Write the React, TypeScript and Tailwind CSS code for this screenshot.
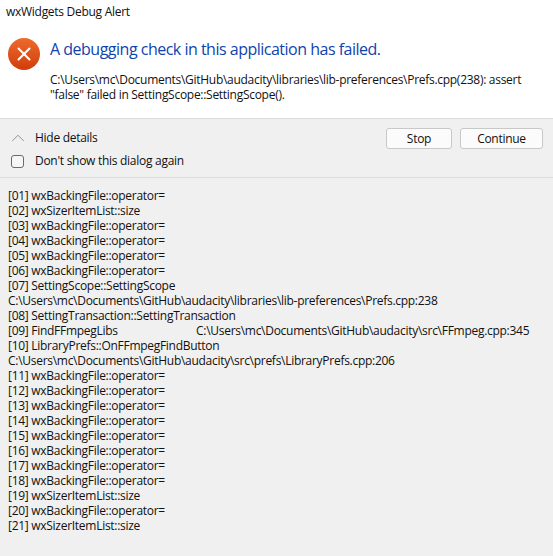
import { ChevronUp, X } from 'lucide-react';

const font = { fontFamily: '"Open Sans", "Noto Sans", sans-serif' };

const trace = [
  '[01] wxBackingFile::operator=',
  '[02] wxSizerItemList::size',
  '[03] wxBackingFile::operator=',
  '[04] wxBackingFile::operator=',
  '[05] wxBackingFile::operator=',
  '[06] wxBackingFile::operator=',
  '[07] SettingScope::SettingScope',
  'C:\\Users\\mc\\Documents\\GitHub\\audacity\\libraries\\lib-preferences\\Prefs.cpp:238',
  '[08] SettingTransaction::SettingTransaction',
  null,
  '[10] LibraryPrefs::OnFFmpegFindButton',
  'C:\\Users\\mc\\Documents\\GitHub\\audacity\\src\\prefs\\LibraryPrefs.cpp:206',
  '[11] wxBackingFile::operator=',
  '[12] wxBackingFile::operator=',
  '[13] wxBackingFile::operator=',
  '[14] wxBackingFile::operator=',
  '[15] wxBackingFile::operator=',
  '[16] wxBackingFile::operator=',
  '[17] wxBackingFile::operator=',
  '[18] wxBackingFile::operator=',
  '[19] wxSizerItemList::size',
  '[20] wxBackingFile::operator=',
  '[21] wxSizerItemList::size',
];

export default function App() {
  return (
    <div style={font} className="flex h-[556px] w-[553px] flex-col overflow-hidden bg-[#f0f0f0] text-[12px] tracking-[-0.28px] text-[#111]">
      {/* Title + message */}
      <div className="h-[119px] shrink-0 border-b border-[#dcdcdc] bg-white">
        <div className="pl-[6px] pt-[3px] text-[12px] leading-[18px]">wxWidgets Debug Alert</div>
        <div className="flex gap-[10px] pl-[8px] pt-[16px]">
          <div className="mt-[1px] flex h-[32px] w-[32px] shrink-0 items-center justify-center rounded-full bg-gradient-to-b from-[#ee6a2c] to-[#d03c06]">
            <X size={22} strokeWidth={2.2} className="text-white" />
          </div>
          <div>
            <div className="text-[16px] leading-[24px] tracking-[-0.5px] text-[#0f43ad]">A debugging check in this application has failed.</div>
            <div className="mt-[11px] w-[480px] text-[12px] leading-[15px]">
              C:\Users\mc\Documents\GitHub\audacity\libraries\lib-preferences\Prefs.cpp(238): assert "false" failed in SettingScope::SettingScope().
            </div>
          </div>
        </div>
      </div>

      {/* Buttons row */}
      <div className="flex h-[59px] shrink-0 justify-between border-b border-[#dcdcdc] pl-[11px] pr-[10px] pt-[9px]">
        <div>
          <div className="flex h-[20px] items-center gap-[10px]">
            <div className="flex w-[14px] justify-center">
              <ChevronUp size={22} strokeWidth={1} className="shrink-0 text-[#8a8a8a]" />
            </div>
            <span>Hide details</span>
          </div>
          <label className="mt-[3px] flex h-[20px] items-center gap-[11px]">
            <span className="h-[13px] w-[13px] rounded-[3px] border border-[#6a6a6a] bg-[#f6f6f6]" />
            <span>Don't show this dialog again</span>
          </label>
        </div>
        <div className="flex gap-[8px]">
          <button className="h-[21px] w-[66px] rounded-[3px] border border-[#c8c8c8] bg-[#fbfbfb] text-[12px]">Stop</button>
          <button className="h-[21px] w-[83px] rounded-[3px] border border-[#c8c8c8] bg-[#fbfbfb] text-[12px]">Continue</button>
        </div>
      </div>

      {/* Stack trace */}
      <div className="pl-[8px] pt-[10px] text-[12px] leading-[15px]">
        {trace.map((line, i) =>
          line === null ? (
            <div key={i} className="flex">
              <span className="w-[188px] shrink-0">[09] FindFFmpegLibs</span>
              <span>C:\Users\mc\Documents\GitHub\audacity\src\FFmpeg.cpp:345</span>
            </div>
          ) : (
            <div key={i}>{line}</div>
          ),
        )}
      </div>
    </div>
  );
}
